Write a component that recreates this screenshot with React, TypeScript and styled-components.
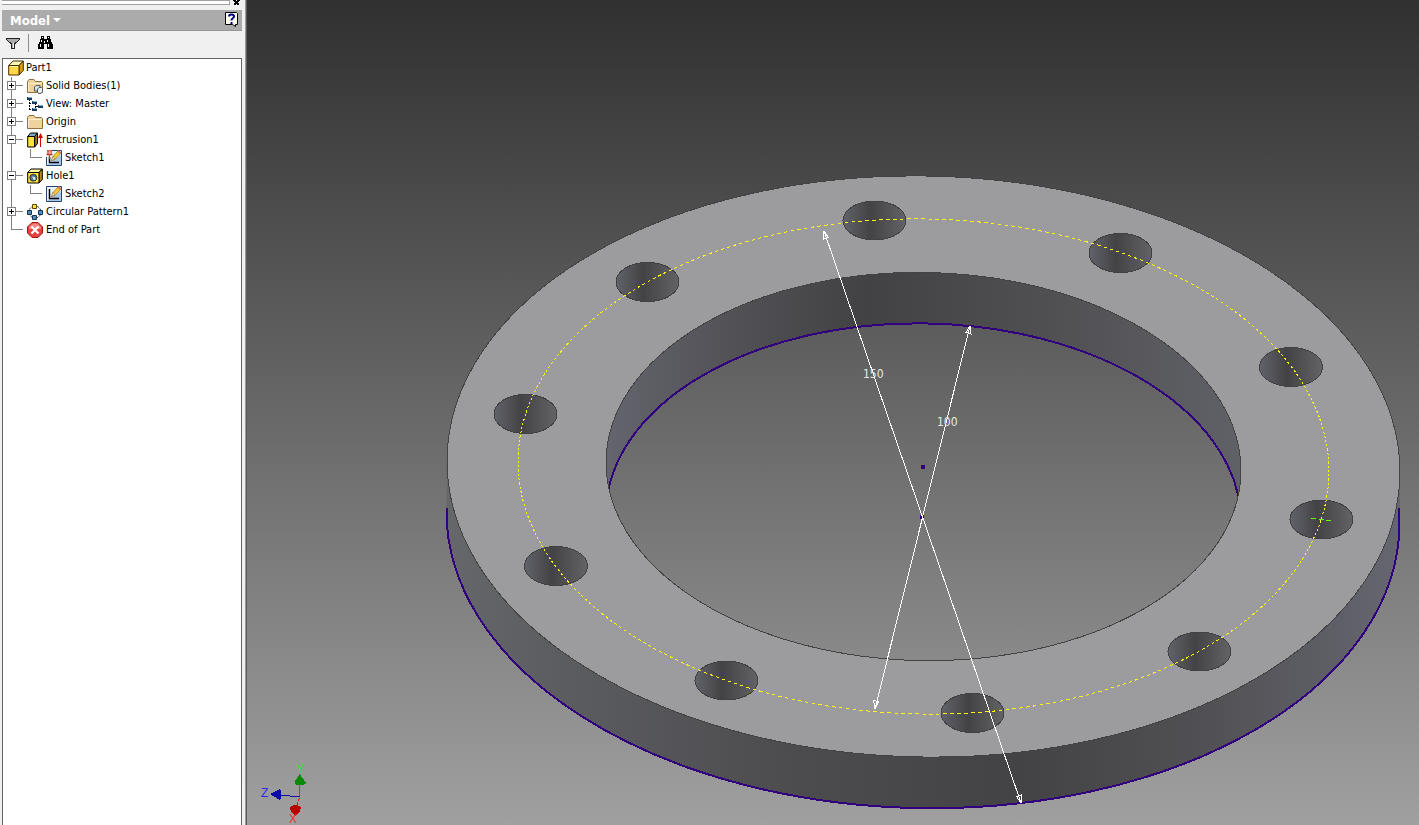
import React from "react";
import styled, { createGlobalStyle } from "styled-components";

const Global = createGlobalStyle`
  *, *::before, *::after { box-sizing: border-box; }
  html, body, #root { height: 100%; }
  body { margin: 0; overflow: hidden; background: #f0f0f0; }
  body, button { font-family: "DejaVu Sans Condensed", "DejaVu Sans", sans-serif; font-size: 11px; }
`;

const Window = styled.div`
  display: flex;
  height: 100vh;
`;

const Browser = styled.aside`
  display: flex;
  flex-direction: column;
  flex: 0 0 247px;
  padding: 0 4px 0 2px;
  background: #f0f0f0;
  border-right: 1px solid #5c5c5c;
  box-shadow: inset -1px 0 0 #9a9a9a;
`;

const Grip = styled.div`
  display: flex;
  align-items: flex-start;
  height: 10px;
`;

const GripBars = styled.div`
  flex: 1;
  height: 5px;
  margin-right: 3px;
  border: solid #a0a0a0;
  border-width: 1px 1px 1px 0;
  background: #fff;
`;

const IconButton = styled.button`
  display: flex;
  align-items: center;
  justify-content: center;
  padding: 0;
  border: 0;
  background: none;
  svg { display: block; }
`;

const TitleBar = styled.header`
  display: flex;
  align-items: center;
  justify-content: space-between;
  height: 21px;
  padding: 0 3px 0 8px;
  background: #ababab;
  border-bottom: 1px solid #979797;
`;

const TitleButton = styled.button`
  display: flex;
  align-items: center;
  gap: 3px;
  padding: 0;
  border: 0;
  background: none;
  color: #fff;
  font-family: "DejaVu Sans Condensed", "DejaVu Sans", sans-serif;
  font-size: 13px;
  font-weight: bold;
`;

const Toolbar = styled.div`
  display: flex;
  align-items: center;
  gap: 8px;
  height: 27px;
  padding: 0 3px 3px;
`;

const Divider = styled.span`
  width: 1px;
  height: 18px;
  background: #8c8c8c;
`;

const TreeBox = styled.nav`
  flex: 1;
  padding: 0 0 0 4px;
  background: #fff;
  border: 1px solid #646464;
  border-bottom: 0;
`;

const Tree = styled.ul`
  margin: 0;
  padding: 0;
  list-style: none;
`;

const Row = styled.li<{ $root?: boolean }>`
  display: flex;
  align-items: center;
  height: 18px;
  padding-left: ${(p) => (p.$root ? 1 : 0)}px;
  color: #000;
  line-height: 18px;
  white-space: nowrap;
  svg { display: block; flex: none; }
`;

const Label = styled.span<{ $root?: boolean }>`
  padding-left: ${(p) => (p.$root ? 2 : 3)}px;
`;

const Toggle = styled.button`
  display: block;
  width: 20px;
  height: 18px;
  padding: 0;
  border: 0;
  background: none;
`;

const Viewport = styled.main`
  flex: 1;
  min-width: 0;
  overflow: hidden;
  background: linear-gradient(#303030, #a0a0a0);
`;

const Scene = styled.svg`
  display: block;
  width: 100%;
  height: 100%;
`;

const DimensionText = styled.text`
  fill: #e8e8e8;
  font: 12px "DejaVu Sans Condensed", sans-serif;
`;

const AxisText = styled.text`
  font: 12px "Liberation Sans", sans-serif;
`;

type IconName = "part" | "bodies" | "view" | "folder" | "extrude" | "sketchShared" | "hole" | "sketch" | "pattern" | "end";

const Folder = () => (
  <g>
    <path d="M.5 14.500V3.500L2 1.500h5l1.500 2h6l1 1v10z" fill="#efd39c" stroke="#8d7043" />
    <path d="M1.500 13V5.500h13" fill="none" stroke="#fff0c9" />
  </g>
);

const SketchPage = () => (
  <g>
    <path d="M.5.500h15v15H.5z" fill="#e9f2fb" stroke="#24466c" />
    <path d="M1 15h14V5z" fill="#a8c6e6" />
    <path d="M3.500 3v9.500H13" fill="none" stroke="#000" strokeWidth="1.500" />
    <path d="M5.500 10.500l1.500-4 5.500-6 2.500 2.500-6 6.500z" fill="#f6c930" stroke="#93650d" strokeWidth=".7" />
    <path d="M5.500 10.500l1.500-4 2 2.500z" fill="#fff0cf" stroke="#775b32" strokeWidth=".5" />
    <path d="M12.500 0l3 2.500-1.500 1.500-2.500-2.500z" fill="#d77664" />
  </g>
);

const icons: Record<IconName, React.ReactNode> = {
  part: (
    <g stroke="#4c2a00" strokeLinejoin="round">
      <path d="M.7 5.500L5 1h10.300L11 5.500z" fill="#fff8b5" />
      <path d="M11 5.500L15.300 1v9.500L11 15z" fill="#d89a13" />
      <path d="M.7 5.500H11V15H.7z" fill="#ffd84a" />
      <path d="M2 6.500h8" stroke="#fff3a6" />
    </g>
  ),
  bodies: (
    <g>
      <Folder />
      <path d="M7.500 9l1.500-1.500h4v3l-2 2.500h-3.500z" fill="#d9e0e5" stroke="#4e5961" />
      <path d="M10.500 11l1.500-1.500h2.500l1 1v3l-1.500 2h-2.500l-1-1.500z" fill="#e9eef2" stroke="#4e5961" />
    </g>
  ),
  view: (
    <g shapeRendering="crispEdges">
      <path d="M2.500 3v11M2 7.500h4M2 13.500h4M8.500 7v6M9 10.500h3" fill="none" stroke="#000" strokeDasharray="2 1" />
      <path d="M0 1h5v3H0zM5 5h5v3H5zM5 12h5v3H5zM11 9h5v3h-5z" fill="#1e3956" />
      <path d="M1 1h4v1H1zM6 5h4v1H6zM6 12h4v1H6zM12 9h4v1h-4z" fill="#70b4ed" />
    </g>
  ),
  folder: <Folder />,
  extrude: (
    <g>
      <path d="M.7 4.500L3.500 1h7L8 4.500z" fill="#76a8c7" stroke="#000" />
      <path d="M.7 4.500h7V15h-7z" fill="#ffe23b" stroke="#000" />
      <path d="M7.700 4.500L10.500 1v10.500L7.700 15z" fill="#9a7300" stroke="#000" />
      <path d="M13.500 15V3" fill="none" stroke="#d90000" />
      <path d="M13.500 1l2.500 5h-5z" fill="#d90000" />
    </g>
  ),
  sketch: <SketchPage />,
  sketchShared: (
    <g>
      <SketchPage />
      <path d="M0 0h6v7H0z" fill="#fff" />
      <path d="M1 .8h5M2 1v3M5 1v3M.5 4.500h6M3.500 5v4" fill="none" stroke="#c83825" strokeWidth="1.300" />
      <path d="M3 1h1.500v3H3z" fill="#ffb29a" />
    </g>
  ),
  hole: (
    <g>
      <path d="M.7 4.500L4 1h11.300L12 4.500z" fill="#fff79d" stroke="#000" />
      <path d="M12 4.500L15.300 1v10.500L12 15z" fill="#b38e00" stroke="#000" />
      <path d="M.7 4.500H12V15H.7z" fill="#ffe23b" stroke="#000" />
      <circle cx="6.300" cy="9.700" r="3.500" fill="#4d7396" stroke="#222" strokeWidth=".8" />
      <path d="M5.500 8.500a3 3 0 0 1 3 3.500q-3 0-3-3.500z" fill="#e5f1fa" />
    </g>
  ),
  pattern: (
    <g>
      <circle cx="8" cy="8" r="6" fill="none" stroke="#222" strokeDasharray="2 1" />
      <path d="M5.500.500h4v4h-4z" fill="#ffe23b" stroke="#574500" />
      <path d="M.5 6.500h4v4h-4zM11.500 6.500h4v4h-4zM5.500 11.500h4v4h-4z" fill="#4e8abb" stroke="#17344f" />
    </g>
  ),
  end: (
    <g>
      <path d="M5 .5h6L15.500 5v6L11 15.500H5L.5 11V5z" fill="#e9413f" stroke="#9a1719" />
      <path d="M2 5l3.500-3.500h5L14 5v2H2z" fill="#f38680" />
      <path d="M4.500 4.500l7 7M11.500 4.500l-7 7" stroke="#fff" strokeWidth="2.200" />
    </g>
  ),
};

interface Item {
  label: string;
  icon: IconName;
  depth: number;
  open?: boolean;
  last?: boolean;
}

const items: Item[] = [
  { label: "Solid Bodies(1)", icon: "bodies", depth: 1, open: false },
  { label: "View: Master", icon: "view", depth: 1, open: false },
  { label: "Origin", icon: "folder", depth: 1, open: false },
  { label: "Extrusion1", icon: "extrude", depth: 1, open: true },
  { label: "Sketch1", icon: "sketchShared", depth: 2 },
  { label: "Hole1", icon: "hole", depth: 1, open: true },
  { label: "Sketch2", icon: "sketch", depth: 2 },
  { label: "Circular Pattern1", icon: "pattern", depth: 1, open: false },
  { label: "End of Part", icon: "end", depth: 1, last: true },
];

const Icon = ({ name }: { name: IconName }) => (
  <svg width="16" height="16" viewBox="0 0 16 16" aria-hidden="true">{icons[name]}</svg>
);

const Branch = ({ item }: { item: Item }) => {
  if (item.depth === 2)
    return (
      <svg width="39" height="18" shapeRendering="crispEdges">
        <path d="M4.500 0v18M23.500 0v8.500H35" fill="none" stroke="#808080" />
      </svg>
    );
  const lines = (
    <svg width="20" height="18" shapeRendering="crispEdges">
      <path d={item.last ? "M4.500 0v8.500H16" : "M4.500 0v18M9 8.500h7"} fill="none" stroke="#808080" />
      {item.open !== undefined && (
        <>
          <path d="M.5 4.500h8v8h-8z" fill="#fff" stroke="#808080" />
          <path d={item.open ? "M2 8.500h5" : "M2 8.500h5M4.500 6v5"} stroke="#000" />
        </>
      )}
    </svg>
  );
  return item.open === undefined ? lines : <Toggle aria-label={`Toggle ${item.label}`}>{lines}</Toggle>;
};

const TILT = 1.07;
const cx = 923.5;
const cy = 466.5;

const holes = [
  [874.5, 220.5], [1120.5, 253], [1291, 367], [1321.5, 519.5], [1199.5, 651.5],
  [972.5, 713], [726.5, 680.5], [556, 566], [525.5, 414], [647.5, 282],
];

const ring = (x: number, y: number, rx: number, ry: number) => {
  const a = (TILT * Math.PI) / 180;
  const dx = rx * Math.cos(a);
  const dy = rx * Math.sin(a);
  return `M${x - dx} ${y - dy}A${rx} ${ry} ${TILT} 1 1 ${x + dx} ${y + dy}A${rx} ${ry} ${TILT} 1 1 ${x - dx} ${y - dy}Z`;
};

/* The bolt circle is dashed evenly in its own plane, so dashes shorten where the circle is foreshortened. */
const boltCircle = (() => {
  const count = 364;
  const a = (TILT * Math.PI) / 180;
  const point = (t: number) => {
    const u = 405.5 * Math.cos(t);
    const v = 247.5 * Math.sin(t);
    const x = cx + u * Math.cos(a) - v * Math.sin(a);
    const y = cy + u * Math.sin(a) + v * Math.cos(a);
    return `${x.toFixed(1)} ${y.toFixed(1)}`;
  };
  const step = (2 * Math.PI) / count;
  return Array.from({ length: count }, (_, i) => `M${point(i * step)}L${point((i + 0.52) * step)}`).join("");
})();

const outer = ring(cx, cy, 476.5, 290.5);
const inner = ring(cx, cy, 317.5, 194);
const lowerOuter = ring(cx - 0.5, cy + 51, 476.5, 290.5);
const lowerInner = ring(cx, cy + 51, 317.5, 194);

const Model = () => (
  <Scene viewBox="247 0 1172 825" preserveAspectRatio="xMinYMin slice" role="img" aria-label="Flange model with bolt circle">
    <defs>
      <linearGradient id="wall" gradientUnits="userSpaceOnUse" x1="446" x2="1400" y1="0" y2="0">
        <stop offset="0" stopColor="#66676b" />
        <stop offset=".1" stopColor="#5d5e62" />
        <stop offset=".35" stopColor="#4d4d50" />
        <stop offset=".6" stopColor="#434345" />
        <stop offset=".8" stopColor="#515155" />
        <stop offset="1" stopColor="#65666f" />
      </linearGradient>
      <linearGradient id="bore" gradientUnits="userSpaceOnUse" x1="606" x2="1241" y1="0" y2="0">
        <stop offset="0" stopColor="#64656d" />
        <stop offset=".2" stopColor="#515156" />
        <stop offset=".41" stopColor="#424244" />
        <stop offset=".7" stopColor="#505053" />
        <stop offset="1" stopColor="#606167" />
      </linearGradient>
      <linearGradient id="hole">
        <stop offset="0" stopColor="#62636b" />
        <stop offset=".43" stopColor="#434345" />
        <stop offset="1" stopColor="#636367" />
      </linearGradient>
      <clipPath id="opening"><path d={inner} /></clipPath>
      <clipPath id="lowerEdge"><path d="M440 508H1410V825H440Z" /></clipPath>
      <mask id="throughBore">
        <path d={inner} fill="#fff" />
        <path d={lowerInner} fill="#000" />
      </mask>
      <mask id="bodyMask">
        <path d={lowerOuter} fill="#fff" />
        <path d="M446.500 460V513H1400V474Z" fill="#fff" />
        <path d={inner} fill="#000" />
      </mask>
    </defs>

    <g shapeRendering="crispEdges">
      <path d="M446 170H1401V810H446Z" fill="url(#wall)" mask="url(#bodyMask)" />
      <path d={lowerOuter} fill="none" stroke="#30007e" strokeWidth="2" clipPath="url(#lowerEdge)" />
      <path d={`${outer} ${inner}`} fill="#9c9c9e" fillRule="evenodd" stroke="#434343" />
      <path d={inner} fill="url(#bore)" mask="url(#throughBore)" />
      <path d={lowerInner} fill="none" stroke="#30007e" strokeWidth="2" clipPath="url(#opening)" />
      <path d={inner} fill="none" stroke="#434343" />
      {holes.map(([x, y]) => (
        <ellipse key={x} cx={x} cy={y} rx="31.500" ry="19.500" fill="url(#hole)" stroke="#414141" />
      ))}
      <path d={boltCircle} fill="none" stroke="#ff0" />
      <path d="M1311 518.500h5M1319 519.500h5M1326 520.500h5" stroke="#68ff00" />
      <path d="M921 465h4v4h-4zM920 515h4v4h-4z" fill="#30007e" />
      <path d="M824 231L1021 803M970 326L875 709" stroke="#fff" fill="none" />
      <path d="M824 231l-.5 8 5-1.500zM1021 803l-4.500-6.500 5-1.500zM970 326l-4 6.500 5 1.500zM875 709l-1.500-8.500 5 1z" stroke="#fff" fill="none" />
    </g>
    <DimensionText x="863" y="378">150</DimensionText>
    <DimensionText x="937" y="426">100</DimensionText>

    <g>
      <g shapeRendering="crispEdges">
        <path d="M299.500 797V783" stroke="#109510" />
        <path d="M299.500 797L280 795" stroke="#0a0aa8" />
        <path d="M299.500 798L296 808" stroke="#e01010" strokeDasharray="3 1" />
        <path d="M299.500 774l6 8v2q-5.500 3-11 0v-2z" fill="#088a08" />
        <path d="M270 794l10-5q3 6 0 11z" fill="#0a0aa8" />
        <path d="M290 807q5-4 11 0l-1 5-5 4-4-4z" fill="#b80000" />
      </g>
      <AxisText x="296" y="773" fill="#31e331">Y</AxisText>
      <AxisText x="261" y="797" fill="#2929f0">Z</AxisText>
      <AxisText x="289" y="823" fill="#f02e2e">X</AxisText>
    </g>
  </Scene>
);

export default function App() {
  return (
    <>
      <Global />
      <Window>
        <Browser>
          <Grip>
            <GripBars />
            <IconButton aria-label="Close">
              <svg width="9" height="6" shapeRendering="crispEdges"><path d="M1 0l5 5M6 0L1 5" stroke="#000" strokeWidth="2" /></svg>
            </IconButton>
          </Grip>
          <TitleBar>
            <TitleButton>
              Model
              <svg width="8" height="4"><path d="M0 0h8L4 4z" fill="#fff" /></svg>
            </TitleButton>
            <IconButton aria-label="Help">
              <svg width="14" height="16">
                <path d="M.5.500h11l1 1v11h-2v2l-3-2h-7z" fill="#fffff0" stroke="#000" />
                <path d="M4 4.500q0-2 2.500-2t2.500 2q0 1-1.500 2-1 .7-1 2M6.500 10v2" fill="none" stroke="#00007e" strokeWidth="2" />
              </svg>
            </IconButton>
          </TitleBar>
          <Toolbar>
            <IconButton aria-label="Filter">
              <svg width="15" height="13" shapeRendering="crispEdges">
                <path d="M1.500 1.500h13v1L9.500 7v4.500h-3V7l-5-4.500z" fill="#aaa" stroke="#222" />
                <path d="M8.500 6v5" stroke="#eee" />
              </svg>
            </IconButton>
            <Divider />
            <IconButton aria-label="Find">
              <svg width="17" height="14" shapeRendering="crispEdges">
                <path d="M4 0h3v3h3V0h3v3h1v3h1v2h1v5h-6V8H7v5H1V8h1V6h1V3h1z" fill="#000" />
                <path d="M4 4h1v2H4zM3 8h1v3H3zM5 1h1v1H5zM11 1h1v1h-1zM10 4h1v2h-1zM11 8h1v3h-1zM7 5h1v2H7z" fill="#fff" />
              </svg>
            </IconButton>
          </Toolbar>
          <TreeBox aria-label="Model browser">
            <Tree>
              <Row $root><Icon name="part" /><Label $root>Part1</Label></Row>
              {items.map((item) => (
                <Row key={item.label}>
                  <Branch item={item} />
                  <Icon name={item.icon} />
                  <Label>{item.label}</Label>
                </Row>
              ))}
            </Tree>
          </TreeBox>
        </Browser>
        <Viewport><Model /></Viewport>
      </Window>
    </>
  );
}
